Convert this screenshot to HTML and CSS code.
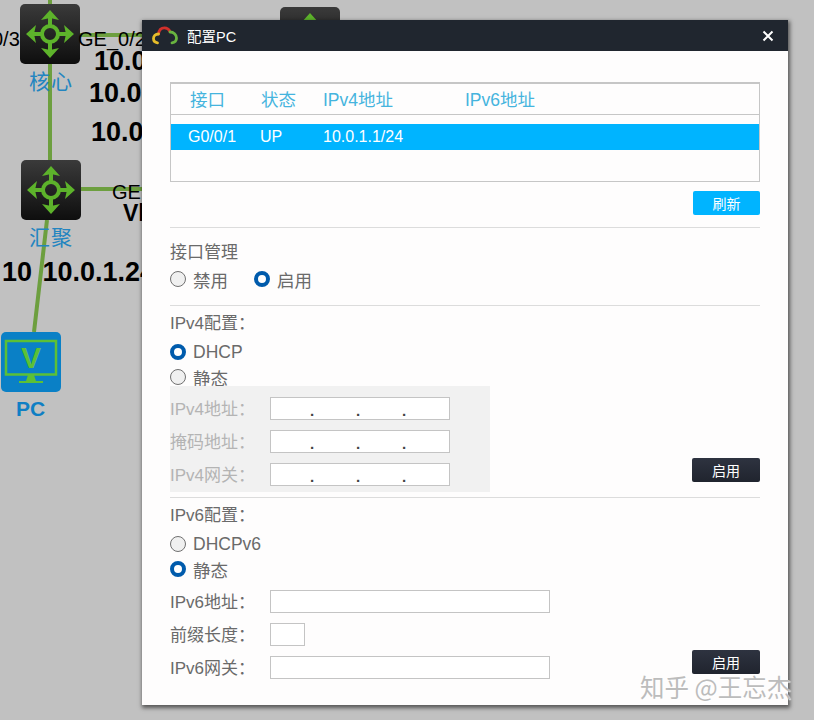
FILE: index.html
```html
<!DOCTYPE html>
<html lang="zh-CN">
<head>
<meta charset="utf-8">
<title>配置PC</title>
<link rel="stylesheet" href="styles.css">
</head>
<body>
<svg class="defs" width="0" height="0" aria-hidden="true">
  <defs>
    <linearGradient id="tile" x1="0" y1="0" x2="0" y2="1">
      <stop offset="0" stop-color="#3a3a3a"/>
      <stop offset="1" stop-color="#0e0e0e"/>
    </linearGradient>
    <symbol id="router" viewBox="0 0 60 60">
      <rect width="60" height="60" rx="5" fill="url(#tile)"/>
      <g fill="none" stroke="#5db32b" stroke-width="4">
        <circle cx="30" cy="30" r="8"/>
        <path d="M30 22V12M30 38V48M22 30H12M38 30H48"/>
      </g>
      <g fill="#5db32b">
        <path d="M30 6L39 16L30 14L21 16Z"/>
        <path d="M30 54L39 44L30 46L21 44Z"/>
        <path d="M6 30L16 21L14 30L16 39Z"/>
        <path d="M54 30L44 21L46 30L44 39Z"/>
      </g>
    </symbol>
    <linearGradient id="cloud-base" x1="0" y1="0" x2="1" y2="0">
      <stop offset="0" stop-color="#e0c22e"/>
      <stop offset=".3" stop-color="#3f9fd8"/>
      <stop offset=".7" stop-color="#3f9fd8"/>
      <stop offset="1" stop-color="#69b440"/>
    </linearGradient>
  </defs>
</svg>

<div class="canvas">
  <svg class="links" width="814" height="720" aria-hidden="true">
    <path d="M50 0V160M80 35H142M81 189H142M47 220L34 332" fill="none" stroke="#6d9f3f" stroke-width="4"/>
  </svg>

  <svg class="node node-core"><use href="#router"/></svg>
  <svg class="node node-agg"><use href="#router"/></svg>
  <svg class="node node-top"><use href="#router"/></svg>
  <svg class="node node-pc" viewBox="0 0 60 60">
    <rect width="60" height="60" rx="5" fill="#0a80c6"/>
    <rect x="5" y="9" width="50" height="33.500" fill="none" stroke="#5cc036" stroke-width="2.500"/>
    <text x="30" y="36" text-anchor="middle" class="pc-v">V</text>
    <path d="M27 43H33L35 49H42V51H18V49H25Z" fill="#5cc036"/>
  </svg>

  <span class="tag port port-a">0/3</span>
  <span class="tag port port-b">GE_0/2</span>
  <span class="tag port port-c">GE</span>
  <span class="tag addr addr-a">10.0</span>
  <span class="tag addr addr-b">10.0</span>
  <span class="tag addr addr-c">10.0</span>
  <span class="tag addr addr-d">10 10.0.1.24</span>
  <span class="tag vlan">Vl</span>
  <span class="tag name name-core">核心</span>
  <span class="tag name name-agg">汇聚</span>
  <span class="tag name-pc">PC</span>
</div>

<section class="dialog">
  <header class="titlebar">
    <svg class="cloud" width="26" height="19" viewBox="0 0 26 19" fill="none" stroke-width="2.800" stroke-linecap="round" aria-hidden="true">
      <path d="M6.500 8C7 4 9.500 1.800 12.500 1.800C15 1.800 17 3.200 18 5.500" stroke="#d2302b"/>
      <path d="M6.500 8C3.500 8 1.500 10 1.500 12.500C1.500 14.800 3 16.500 5.500 16.800" stroke="#e6bd2a"/>
      <path d="M18 6C21.500 6 24.500 8.500 24.500 12C24.500 14.800 22.800 16.500 20 16.800" stroke="#69b440"/>
      <path d="M5.500 16.800H20" stroke="url(#cloud-base)"/>
    </svg>
    <h1 class="title">配置PC</h1>
    <svg class="close" width="12" height="12" viewBox="0 0 12 12" aria-hidden="true">
      <path d="M1.500 1.500L10.500 10.500M10.500 1.500L1.500 10.500" stroke="#fff" stroke-width="2"/>
    </svg>
  </header>

  <div class="body">
    <div class="table">
      <div class="table-head">
        <span>接口</span><span>状态</span><span>IPv4地址</span><span>IPv6地址</span>
      </div>
      <div class="table-row">
        <span>G0/0/1</span><span>UP</span><span>10.0.1.1/24</span><span></span>
      </div>
    </div>
    <div class="toolbar"><button class="btn btn-blue">刷新</button></div>

    <div class="section section-iface">
      <div class="heading">接口管理</div>
      <div class="radio-inline">
        <label class="radio"><i class="dot"></i>禁用</label>
        <label class="radio"><i class="dot on"></i>启用</label>
      </div>
    </div>

    <div class="section section-v4">
      <div class="heading">IPv4配置：</div>
      <div class="radio-stack">
        <label class="radio"><i class="dot on"></i>DHCP</label>
        <label class="radio"><i class="dot"></i>静态</label>
      </div>
      <div class="split">
        <div class="disabled-box">
          <div class="field"><span class="field-label">IPv4地址：</span><div class="input ip"><b>.</b><b>.</b><b>.</b></div></div>
          <div class="field"><span class="field-label">掩码地址：</span><div class="input ip"><b>.</b><b>.</b><b>.</b></div></div>
          <div class="field"><span class="field-label">IPv4网关：</span><div class="input ip"><b>.</b><b>.</b><b>.</b></div></div>
        </div>
        <button class="btn btn-dark btn-v4">启用</button>
      </div>
    </div>

    <div class="section section-v6">
      <div class="heading">IPv6配置：</div>
      <div class="radio-stack stack-v6">
        <label class="radio"><i class="dot"></i>DHCPv6</label>
        <label class="radio"><i class="dot on"></i>静态</label>
      </div>
      <div class="split">
        <div class="fields-v6">
          <div class="field"><span class="field-label">IPv6地址：</span><div class="input wide"></div></div>
          <div class="field"><span class="field-label">前缀长度：</span><div class="input tiny"></div></div>
          <div class="field"><span class="field-label">IPv6网关：</span><div class="input wide"></div></div>
        </div>
        <button class="btn btn-dark btn-v6">启用</button>
      </div>
    </div>
  </div>
</section>

<div class="watermark">知乎 @王忘杰</div>
</body>
</html>
```
FILE: styles.css
```css
* { box-sizing: border-box; }

html, body {
  margin: 0;
  height: 100%;
  overflow: hidden;
}

body {
  position: relative;
  width: 814px;
  height: 720px;
  background: #c1c1c1;
  font-family: "Liberation Sans", "Noto Sans CJK SC", sans-serif;
  color: #666;
}

.defs { position: absolute; }

/* Network diagram behind the dialog */
.canvas { position: absolute; inset: 0; overflow: hidden; }
.links { position: absolute; left: 0; top: 0; }
.node { position: absolute; width: 60px; height: 60px; }
.node-core { left: 20px; top: 4px; }
.node-agg { left: 21px; top: 160px; }
.node-top { left: 280px; top: 7px; }
.node-pc { left: 1px; top: 332px; }
.pc-v { font: bold 30px "Liberation Sans", sans-serif; fill: #5cc036; }

.tag { position: absolute; white-space: nowrap; color: #000; }
.port { font-size: 20px; line-height: 24px; }
.port-a { left: -8px; top: 27px; }
.port-b { left: 78px; top: 27px; }
.port-c { left: 112px; top: 180px; }
.addr { font-size: 27px; font-weight: bold; line-height: 30px; }
.addr-a { left: 94px; top: 46px; }
.addr-b { left: 89px; top: 78px; }
.addr-c { left: 91px; top: 117px; }
.addr-d { left: 2px; top: 257px; word-spacing: 3px; }
.vlan { left: 123px; top: 200px; font-size: 23px; font-weight: bold; line-height: 26px; }
.name { font-size: 21px; line-height: 26px; color: #2385c0; letter-spacing: 1px; }
.name-core { left: 29px; top: 69px; }
.name-agg { left: 29px; top: 225px; }
.name-pc { left: 16px; top: 397px; font-size: 21px; font-weight: bold; line-height: 24px; color: #0f7fc4; }

/* Dialog window */
.dialog {
  position: absolute;
  left: 142px;
  top: 20px;
  width: 646px;
  height: 685px;
  background: #fefdfd;
  box-shadow: 1px 2px 4px 1px rgba(0, 0, 0, .55);
}

.titlebar {
  display: flex;
  align-items: center;
  height: 31px;
  padding: 0 14px 0 10px;
  background: #20262f;
  color: #fff;
}
.cloud { flex: none; margin-top: -1px; }
.title {
  margin: 0 0 0 9px;
  font-size: 14.500px;
  font-weight: normal;
}
.close { margin-left: auto; }

.body { padding: 31px 28px 0; }

/* Table */
.table {
  height: 100px;
  border: 1px solid #c6c6c6;
  border-top-width: 2px;
}
.table-head, .table-row {
  display: grid;
  align-items: center;
}
.table-head {
  grid-template-columns: 71px 62px 142px 1fr;
  height: 31px;
  padding: 0 0 2px 19px;
  border-bottom: 1px solid #c6c6c6;
  font-size: 17.500px;
  color: #45b4de;
}
.table-row {
  grid-template-columns: 72px 63px 142px 1fr;
  height: 26px;
  margin-top: 9px;
  padding-left: 17px;
  background: #00b4ff;
  font-size: 16px;
  color: #fff;
}

.toolbar { display: flex; justify-content: flex-end; margin-top: 9px; }

.btn {
  display: block;
  height: 24px;
  padding: 0;
  border: 0;
  border-radius: 2px;
  font: 14px "Noto Sans CJK SC", sans-serif;
  color: #fff;
}
.btn-blue { width: 67px; background: #00b4ff; }
.btn-dark { width: 68px; background: linear-gradient(#2e3340, #20242e); }

/* Sections */
.section { border-top: 1px solid #dcdcdc; }
.section-iface { margin-top: 12px; padding: 12px 0 16px; }
.section-v4 { padding-top: 6px; }
.section-v6 { padding-top: 6px; }
.heading { height: 24px; font-size: 17px; line-height: 24px; color: #6a6a6a; }
.section-iface .heading { height: 26px; line-height: 26px; }

.radio {
  display: flex;
  align-items: center;
  height: 20px;
  font-size: 17.500px;
  color: #6a6a6a;
}
.radio-inline { display: flex; gap: 26px; margin-top: 3px; }
.radio-stack { display: flex; flex-direction: column; gap: 5px; margin-top: 6px; }
.stack-v6 { margin-top: 6px; }

.dot {
  flex: none;
  width: 16px;
  height: 16px;
  margin-right: 7px;
  border: 1.500px solid #707070;
  border-radius: 50%;
  background: #f0f0f0;
}
.dot.on {
  border: 4.500px solid #005bac;
  background: #fff;
}

.split { display: flex; justify-content: space-between; align-items: flex-end; }

.disabled-box {
  display: flex;
  flex-direction: column;
  gap: 10px;
  width: 320px;
  margin: -1px 0 5px;
  padding: 11px 0 6px;
  background: #f1f1f1;
}
.disabled-box .field-label { color: #b4b4b4; }
.btn-v4 { margin-bottom: 15px; }

.field { display: flex; align-items: center; height: 23px; }
.field-label { flex: none; width: 100px; padding-bottom: 2px; font-size: 17px; color: #6a6a6a; }

.input {
  height: 23px;
  border: 1px solid #c4c4c4;
  background: #fff;
}
.ip { display: flex; width: 180px; padding-left: 18px; }
.ip b {
  flex: none;
  width: 46px;
  font-size: 15px;
  font-weight: bold;
  line-height: 25px;
  text-align: center;
  color: #444;
}
.wide { width: 280px; }
.tiny { width: 35px; }

.fields-v6 {
  display: flex;
  flex-direction: column;
  gap: 10px;
  margin-top: 11px;
}
.btn-v6 { margin-bottom: 5px; }

/* Watermark over the dialog corner */
.watermark {
  position: absolute;
  left: 640px;
  top: 675px;
  font: 24.500px/24px "Noto Sans CJK SC", sans-serif;
  color: #bcbcbc;
  text-shadow: 1px 1px 1px rgba(255, 255, 255, .8);
  white-space: nowrap;
}
```
